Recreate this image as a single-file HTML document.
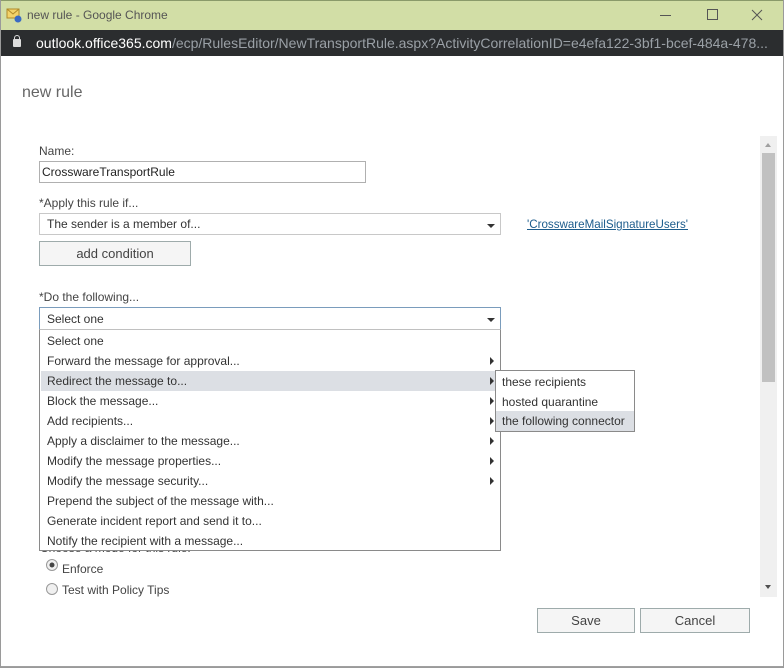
<!DOCTYPE html>
<html><head><style>
*{margin:0;padding:0;box-sizing:border-box}
body{width:784px;height:668px;overflow:hidden;background:#fff;font-family:"Liberation Sans",sans-serif;font-size:12px;color:#333;position:relative}
.a{position:absolute;white-space:nowrap}
.frame{position:absolute;left:0;top:0;width:784px;height:668px;border:1px solid #9a9a9a;border-top:none}
.title{left:0;top:0;width:784px;height:30px;background:#d2dea6;border-top:1px solid #8a9a6a}
.addr{left:0;top:30px;width:784px;height:26px;background:#2b2d2f;color:#9aa0a6;font-size:14px;line-height:26px}
.box{border:1px solid #b0b0b0;background:#fff}
.arr{position:absolute;width:0;height:0;border-left:4px solid transparent;border-right:4px solid transparent;border-top:4px solid #333}
.rarr{position:absolute;width:0;height:0;border-top:4px solid transparent;border-bottom:4px solid transparent;border-left:4px solid #333}
.item{position:absolute;left:1px;width:459px;height:20px;line-height:20px;padding-left:6px}
.btn{background:#f5f5f5;border:1px solid #9eabab;text-align:center;color:#444;font-size:13px}
</style></head><body>
<div class="a title"></div>
<svg class="a" style="left:6px;top:7px" width="16" height="16"><rect x="1" y="2" width="12" height="9" fill="#f3d36a" stroke="#b08a2a"/><path d="M1 2 L7 7 L13 2" stroke="#b08a2a" fill="none"/><circle cx="12" cy="12" r="3.5" fill="#3a6bc4"/></svg>
<div class="a" style="left:27px;top:8px;font-size:12px;color:#555">new rule - Google Chrome</div>
<div class="a" style="left:660px;top:15px;width:11px;height:1px;background:#555"></div>
<div class="a" style="left:707px;top:9px;width:11px;height:11px;border:1px solid #555"></div>
<svg class="a" style="left:751px;top:9px" width="12" height="12"><path d="M1 1L11 11M11 1L1 11" stroke="#555" stroke-width="1"/></svg>
<div class="a addr"><span style="position:absolute;left:13px;top:9px;width:8px;height:8px;background:#ddd;border-radius:1px"></span><span style="position:absolute;left:14px;top:5px;width:6px;height:6px;border:1.5px solid #ddd;border-bottom:none;border-radius:3px 3px 0 0"></span><span style="position:absolute;left:36px;top:0"><span style="color:#fff">outlook.office365.com</span>/ecp/RulesEditor/NewTransportRule.aspx?ActivityCorrelationID=e4efa122-3bf1-bcef-484a-478...</span></div>
<div class="a" style="left:22px;top:84px;font-size:16px;color:#666">new rule</div>

<div class="a" style="left:39px;top:144px;color:#444">Name:</div>
<div class="a box" style="left:39px;top:161px;width:327px;height:22px;padding:3px 2px;color:#222">CrosswareTransportRule</div>
<div class="a" style="left:39px;top:196px;color:#444">*Apply this rule if...</div>
<div class="a box" style="left:39px;top:213px;width:462px;height:22px;padding:3px 7px;border-color:#c8c8c8">The sender is a member of...</div>
<div class="arr" style="left:487px;top:224px"></div>
<div class="a" style="left:527px;top:218px;color:#1c5c8c;text-decoration:underline;font-size:11.6px">'CrosswareMailSignatureUsers'</div>
<div class="a btn" style="left:39px;top:241px;width:152px;height:25px;line-height:23px">add condition</div>
<div class="a" style="left:39px;top:290px;color:#444">*Do the following...</div>
<div class="a box" style="left:39px;top:307px;width:462px;height:23px;padding:4px 7px;border-color:#7a9cbc">Select one</div>
<div class="arr" style="left:487px;top:318px"></div>

<div class="a" style="left:40px;top:541px;color:#444">Choose a mode for this rule:</div>
<svg class="a" style="left:45px;top:558px" width="14" height="14"><circle cx="7" cy="7" r="5.5" fill="#f0f0f0" stroke="#999"/><circle cx="7" cy="7" r="2.5" fill="#444"/></svg>
<div class="a" style="left:62px;top:562px;color:#444">Enforce</div>
<svg class="a" style="left:45px;top:582px" width="14" height="14"><circle cx="7" cy="7" r="5.5" fill="#f0f0f0" stroke="#999"/></svg>
<div class="a" style="left:62px;top:583px;color:#444">Test with Policy Tips</div>

<div class="a" style="left:39px;top:329px;width:462px;height:222px;background:#fff;border:1px solid #8a8a8a;border-top:1px solid #c0c0c0">
<div class="item" style="top:1px">Select one</div>
<div class="item" style="top:21px">Forward the message for approval...</div>
<div class="item" style="top:41px;background:#dcdfe4">Redirect the message to...</div>
<div class="item" style="top:61px">Block the message...</div>
<div class="item" style="top:81px">Add recipients...</div>
<div class="item" style="top:101px">Apply a disclaimer to the message...</div>
<div class="item" style="top:121px">Modify the message properties...</div>
<div class="item" style="top:141px">Modify the message security...</div>
<div class="item" style="top:161px">Prepend the subject of the message with...</div>
<div class="item" style="top:181px">Generate incident report and send it to...</div>
<div class="item" style="top:201px">Notify the recipient with a message...</div>
<div class="rarr" style="left:450px;top:27px"></div>
<div class="rarr" style="left:450px;top:47px"></div>
<div class="rarr" style="left:450px;top:67px"></div>
<div class="rarr" style="left:450px;top:87px"></div>
<div class="rarr" style="left:450px;top:107px"></div>
<div class="rarr" style="left:450px;top:127px"></div>
<div class="rarr" style="left:450px;top:147px"></div>
</div>
<div class="a" style="left:495px;top:370px;width:140px;height:62px;background:#fff;border:1px solid #8a8a8a">
<div class="item" style="left:0;top:1px;width:138px">these recipients</div>
<div class="item" style="left:0;top:21px;width:138px">hosted quarantine</div>
<div class="item" style="left:0;top:40px;width:138px;background:#dcdfe4">the following connector</div>
</div>

<div class="a" style="left:760px;top:136px;width:17px;height:461px;background:#f0f0f0"></div>
<div class="a" style="left:762px;top:153px;width:13px;height:229px;background:#c1c1c1"></div>
<div class="a" style="left:765px;top:143px;width:0;height:0;border-left:3.5px solid transparent;border-right:3.5px solid transparent;border-bottom:4px solid #a0a0a0"></div>
<div class="a" style="left:765px;top:585px;width:0;height:0;border-left:3.5px solid transparent;border-right:3.5px solid transparent;border-top:4px solid #505050"></div>

<div class="a btn" style="left:537px;top:608px;width:98px;height:25px;line-height:24px">Save</div>
<div class="a btn" style="left:640px;top:608px;width:110px;height:25px;line-height:24px">Cancel</div>
<div class="a" style="left:0;top:666px;width:784px;height:2px;background:#a0a0a0"></div>
<div class="frame"></div>
</body></html>
